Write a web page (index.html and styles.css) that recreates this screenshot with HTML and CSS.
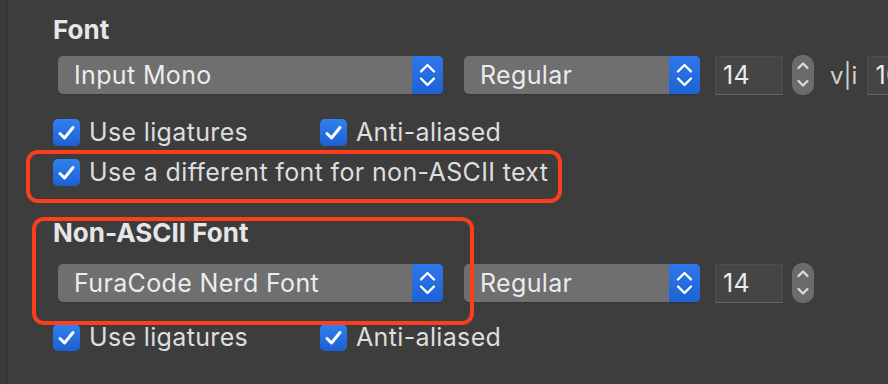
FILE: index.html
```html
<!DOCTYPE html>
<html lang="en">
<head>
    <meta charset="UTF-8">
    <title>Profile - Text</title>
    <link rel="stylesheet" href="styles.css">
</head>
<body>
    <div class="window">
        <div class="pane">
            <h2 class="heading first">Font</h2>
            <div class="font-row">
                <div class="popup name"><span class="popup-label">Input Mono</span><span class="popup-arrows"><svg width="31" height="38" viewBox="0 0 31 38"><path d="M9 15.5 L15.5 9 L22 15.5 M9 22.5 L15.5 29 L22 22.5" /></svg></span></div>
                <div class="popup weight"><span class="popup-label">Regular</span><span class="popup-arrows"><svg width="31" height="38" viewBox="0 0 31 38"><path d="M9 15.5 L15.5 9 L22 15.5 M9 22.5 L15.5 29 L22 22.5" /></svg></span></div>
                <div class="size-field">14</div>
                <div class="stepper"><svg width="22" height="40" viewBox="0 0 22 40"><path d="M6.5 13 L11 8.5 L15.5 13 M6.5 26 L11 30.5 L15.5 26" /></svg></div>
                <span class="spacing-label">v|i</span>
                <div class="size-field">100</div>
            </div>
            <div class="check-row">
                <label class="check"><span class="box"><svg width="27" height="27" viewBox="0 0 27 27"><path d="M7 14.5 L11.5 19 L20 8.5" /></svg></span>Use ligatures</label>
                <label class="check"><span class="box"><svg width="27" height="27" viewBox="0 0 27 27"><path d="M7 14.5 L11.5 19 L20 8.5" /></svg></span>Anti-aliased</label>
            </div>
            <div class="check-row single">
                <label class="check"><span class="box"><svg width="27" height="27" viewBox="0 0 27 27"><path d="M7 14.5 L11.5 19 L20 8.5" /></svg></span>Use a different font for non-ASCII text</label>
            </div>

            <h2 class="heading second">Non-ASCII Font</h2>
            <div class="font-row">
                <div class="popup name"><span class="popup-label">FuraCode Nerd Font</span><span class="popup-arrows"><svg width="31" height="38" viewBox="0 0 31 38"><path d="M9 15.5 L15.5 9 L22 15.5 M9 22.5 L15.5 29 L22 22.5" /></svg></span></div>
                <div class="popup weight"><span class="popup-label">Regular</span><span class="popup-arrows"><svg width="31" height="38" viewBox="0 0 31 38"><path d="M9 15.5 L15.5 9 L22 15.5 M9 22.5 L15.5 29 L22 22.5" /></svg></span></div>
                <div class="size-field">14</div>
                <div class="stepper"><svg width="22" height="40" viewBox="0 0 22 40"><path d="M6.5 13 L11 8.5 L15.5 13 M6.5 26 L11 30.5 L15.5 26" /></svg></div>
            </div>
            <div class="check-row last">
                <label class="check"><span class="box"><svg width="27" height="27" viewBox="0 0 27 27"><path d="M7 14.5 L11.5 19 L20 8.5" /></svg></span>Use ligatures</label>
                <label class="check"><span class="box"><svg width="27" height="27" viewBox="0 0 27 27"><path d="M7 14.5 L11.5 19 L20 8.5" /></svg></span>Anti-aliased</label>
            </div>
        </div>

        <!-- annotation boxes drawn over the screenshot -->
        <div class="mark mark-option"></div>
        <div class="mark mark-font"></div>
    </div>
</body>
</html>
```

FILE: styles.css
```css
html, body {
    margin: 0;
    padding: 0;
}
body {
    width: 888px;
    height: 384px;
    overflow: hidden;
    background-color: #3a3a3a;
    font-family: Inter, "Liberation Sans", sans-serif;
    color: #dedede;
}
.window {
    position: relative;
    height: 384px;
    margin-left: 7px;
    border-left: 1px solid #333333;
    background-color: #3d3d3d;
}
.pane {
    padding-left: 45px;
    padding-top: 15px;
}
.heading {
    margin: 0;
    font-size: 26px;
    line-height: 30px;
    font-weight: 700;
    color: #e6e6e6;
}
.heading.second {
    margin-top: 32px;
}
.font-row {
    display: flex;
    align-items: center;
    margin-top: 10px;
    padding-left: 5px;
    height: 40px;
    white-space: nowrap;
}
.heading.second + .font-row {
    margin-top: 15px;
}
.popup {
    display: flex;
    align-items: stretch;
    flex: none;
    height: 38px;
    border-radius: 5px;
    background-color: #6f6f6f;
    box-shadow: 0 1px 0 #353535;
    overflow: hidden;
}
.popup.name {
    width: 385px;
}
.popup.weight {
    width: 236px;
    margin-left: 21px;
}
.popup-label {
    flex: 1;
    padding-left: 16px;
    font-size: 25px;
    letter-spacing: 0.35px;
    line-height: 38px;
    color: #ececec;
}
.popup-arrows {
    width: 31px;
    background: linear-gradient(#2f78e8, #1d62d6);
}
.popup-arrows svg,
.stepper svg,
.box svg {
    display: block;
}
.popup-arrows path {
    fill: none;
    stroke: #ffffff;
    stroke-width: 2.4;
    stroke-linecap: round;
    stroke-linejoin: round;
}
.size-field {
    box-sizing: border-box;
    width: 68px;
    height: 39px;
    margin-left: 15px;
    padding-left: 7px;
    background-color: #454545;
    border: 1px solid #4d4d4d;
    border-bottom-color: #666666;
    font-size: 25px;
    letter-spacing: 0.35px;
    line-height: 37px;
    color: #ececec;
    flex: none;
}
.stepper {
    width: 22px;
    height: 40px;
    margin-left: 9px;
    border-radius: 10px;
    background-color: #6b6b6b;
    flex: none;
}
.stepper path {
    fill: none;
    stroke: #dddddd;
    stroke-width: 2.2;
    stroke-linecap: round;
    stroke-linejoin: round;
}
.spacing-label {
    margin-left: 16px;
    font-size: 24px;
    color: #d0d0d0;
    flex: none;
}
.spacing-label + .size-field {
    margin-left: 10px;
}
.check-row {
    display: grid;
    grid-template-columns: 267px auto;
    margin-top: 24px;
    height: 27px;
}
.check-row.single {
    margin-top: 13px;
}
.check-row.last {
    margin-top: 21px;
}
.check {
    display: flex;
    align-items: center;
    gap: 9px;
    font-size: 25px;
    letter-spacing: 0.35px;
    line-height: 27px;
    white-space: nowrap;
}
.box {
    width: 27px;
    height: 27px;
    border-radius: 5px;
    background: linear-gradient(#3181f0, #1c60d2);
    flex: none;
}
.box path {
    fill: none;
    stroke: #ffffff;
    stroke-width: 3;
    stroke-linecap: round;
    stroke-linejoin: round;
}
.mark {
    position: absolute;
    box-sizing: border-box;
    border: 4px solid #fb3f1c;
    border-radius: 12px;
}
.mark-option {
    left: 18px;
    top: 150px;
    width: 536px;
    height: 53px;
}
.mark-font {
    left: 24px;
    top: 217px;
    width: 442px;
    height: 108px;
}
```
